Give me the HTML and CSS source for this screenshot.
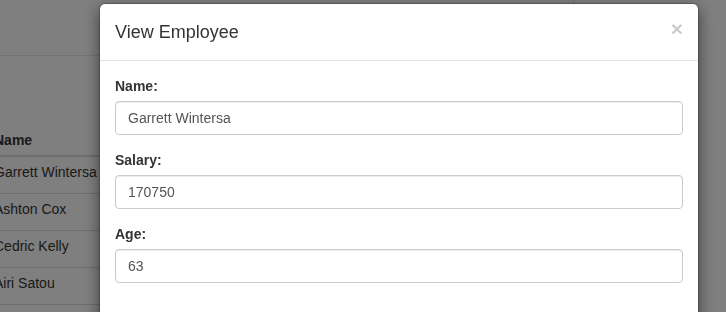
FILE: index.html
```html
<!DOCTYPE html>
<html>
<head>
<meta charset="utf-8">
<link rel="stylesheet" href="styles.css">
</head>
<body>
<div class="page">
  <div class="topbar"><div class="divider"></div></div>
  <table class="table">
    <thead><tr><th>Name</th><th>Position</th><th>Office</th><th>Age</th><th>Salary</th></tr></thead>
    <tbody>
      <tr><td>Garrett Wintersa</td><td>Accountant</td><td>Tokyo</td><td>63</td><td>170750</td></tr>
      <tr><td>Ashton Cox</td><td>Junior Technical Author</td><td>San Francisco</td><td>66</td><td>86000</td></tr>
      <tr><td>Cedric Kelly</td><td>Senior Javascript Developer</td><td>Edinburgh</td><td>22</td><td>433060</td></tr>
      <tr><td>Airi Satou</td><td>Accountant</td><td>Tokyo</td><td>33</td><td>162700</td></tr>
      <tr><td>Brielle Williamson</td><td>Integration Specialist</td><td>New York</td><td>61</td><td>372000</td></tr>
    </tbody>
  </table>
</div>
<div class="backdrop"></div>
<div class="modal">
  <div class="modal-header">
    <button class="close" type="button">&times;</button>
    <h4 class="modal-title">View Employee</h4>
  </div>
  <div class="modal-body">
    <div class="form-group">
      <label class="label">Name:</label>
      <input class="input" type="text" value="Garrett Wintersa">
    </div>
    <div class="form-group">
      <label class="label">Salary:</label>
      <input class="input" type="text" value="170750">
    </div>
    <div class="form-group">
      <label class="label">Age:</label>
      <input class="input" type="text" value="63">
    </div>
  </div>
</div>
</body>
</html>
```
FILE: styles.css
```css
html, body {
  margin: 0;
  padding: 0;
  background: #fff;
  font-family: "Liberation Sans", Arial, sans-serif;
  font-size: 14px;
  line-height: 20px;
  color: #333;
  overflow: hidden;
  height: 312px;
}
.page {
  width: 726px;
  height: 312px;
  overflow: hidden;
}
.topbar {
  width: 640px;
  height: 55px;
  border-bottom: 1px solid #e7e7e7;
  display: flex;
}
.divider {
  margin-left: 573px;
  border-left: 1px solid #e7e7e7;
  height: 55px;
}
.table {
  border-collapse: collapse;
  margin-top: 63px;
  margin-left: -14px;
  white-space: nowrap;
}
.table th, .table td {
  text-align: left;
  line-height: 20px;
}
.table th {
  padding: 11px 8px 5px;
  font-weight: bold;
  border-bottom: 2px solid #ddd;
}
.table td {
  padding: 5px 8px 11px;
  border-top: 1px solid #ddd;
}
.backdrop {
  position: fixed;
  inset: 0;
  background: #000;
  opacity: 0.5;
}
.modal {
  position: fixed;
  top: 3px;
  left: 99px;
  width: 600px;
  height: 360px;
  box-sizing: border-box;
  background: #fff;
  border: 1px solid rgba(0, 0, 0, 0.2);
  border-radius: 6px;
  box-shadow: 0 5px 15px rgba(0, 0, 0, 0.5);
  background-clip: padding-box;
}
.modal-header {
  padding: 15px;
  border-bottom: 1px solid #e5e5e5;
}
.modal-title {
  margin: 0;
  font-size: 18px;
  font-weight: 500;
  line-height: 26px;
}
.close {
  float: right;
  margin-top: -1px;
  padding: 0;
  border: 0;
  background: transparent;
  font-family: "Liberation Sans", Arial, sans-serif;
  font-size: 21px;
  font-weight: bold;
  line-height: 1;
  color: #000;
  opacity: 0.2;
}
.modal-body {
  padding: 15px;
}
.form-group {
  margin-bottom: 15px;
}
.label {
  display: block;
  font-weight: bold;
  margin-bottom: 5px;
}
.input {
  display: block;
  width: 100%;
  height: 34px;
  box-sizing: border-box;
  padding: 6px 12px;
  font-family: "Liberation Sans", Arial, sans-serif;
  font-size: 14px;
  line-height: 20px;
  color: #555;
  background: #fff;
  border: 1px solid #ccc;
  border-radius: 4px;
  box-shadow: inset 0 1px 1px rgba(0, 0, 0, 0.075);
  margin: 0;
}
```
